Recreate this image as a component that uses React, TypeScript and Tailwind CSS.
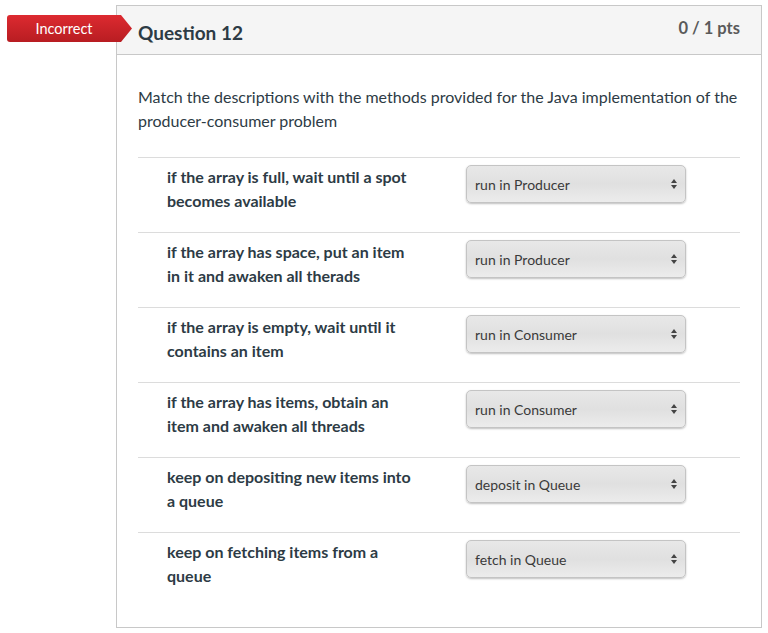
import React from "react";

const rows = [
  ["if the array is full, wait until a spot becomes available", "run in Producer"],
  ["if the array has space, put an item in it and awaken all therads", "run in Producer"],
  ["if the array is empty, wait until it contains an item", "run in Consumer"],
  ["if the array has items, obtain an item and awaken all threads", "run in Consumer"],
  ["keep on depositing new items into a queue", "deposit in Queue"],
  ["keep on fetching items from a queue", "fetch in Queue"],
];

function SelectBox({ label }: { label: string }) {
  return (
    <div className="w-[220px] h-[38px] rounded-[5px] border border-[#c4c4c4] bg-gradient-to-b from-[#e8e8e8] via-[#e0e0e0] to-[#ececec] shadow-[0_1px_2px_rgba(0,0,0,0.25)] flex items-center justify-between pl-[8px] pr-[6px]">
      <span className="text-[14px] text-[#3a3a3a]">{label}</span>
      <svg width="8" height="12" viewBox="0 0 8 12" className="mr-[1px]">
        <path d="M4 1 L7 5 L1 5 Z" fill="#444" />
        <path d="M4 11 L7 7 L1 7 Z" fill="#444" />
      </svg>
    </div>
  );
}

export default function App() {
  return (
    <div className="w-[768px] h-[633px] bg-white relative" style={{ fontFamily: "Lato, 'Open Sans', sans-serif" }}>
      <div className="pt-[5px] pl-[116px] pr-[6px]">
        <div className="border border-[#c8c8c8] h-[623px] w-[646px]">
          <div className="h-[49px] bg-[#f5f5f5] border-b border-[#c8c8c8] flex items-center justify-between pl-[21px] pr-[21px]">
            <span className="text-[19px] font-bold text-[#2d3b45] mt-[6px]">Question 12</span>
            <span className="text-[16.5px] font-bold text-[#5a5a5a] -mt-[3px]">0 / 1 pts</span>
          </div>
          <div className="px-[21px] pt-[30px]">
            <p className="text-[16px] leading-[24px] text-[#2d3b45]">
              Match the descriptions with the methods provided for the Java implementation of the producer-consumer problem
            </p>
            <div className="mt-[24px]">
              {rows.map(([d, s], i) => (
                <div key={i} className="h-[75px] border-t border-[#dcdcdc] flex items-start pt-[7px]">
                  <div className="w-[328px] pl-[29px] pr-[49px] text-[16px] font-bold leading-[24px] text-[#2d3b45]">{d}</div>
                  <div>
                    <SelectBox label={s} />
                  </div>
                </div>
              ))}
            </div>
          </div>
        </div>
      </div>
      <div className="absolute left-[7px] top-[15px] flex">
        <div className="w-[114px] h-[27px] rounded-l-[3px] bg-gradient-to-b from-[#dd2a30] to-[#b81d22] flex items-center justify-center text-white text-[14.5px]">
          Incorrect
        </div>
        <svg width="11" height="27" viewBox="0 0 11 27">
          <defs>
            <linearGradient id="g" x1="0" y1="0" x2="0" y2="1">
              <stop offset="0" stopColor="#dd2a30" />
              <stop offset="1" stopColor="#b81d22" />
            </linearGradient>
          </defs>
          <path d="M0 0 L11 13.5 L0 27 Z" fill="url(#g)" />
        </svg>
      </div>
    </div>
  );
}
